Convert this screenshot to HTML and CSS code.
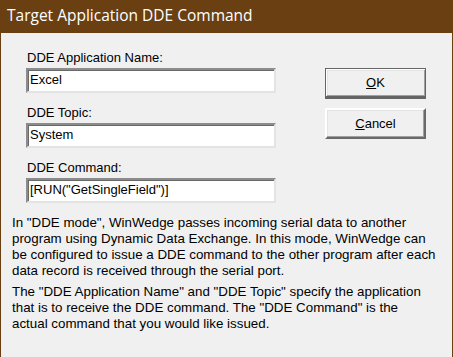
FILE: index.html
```html
<!DOCTYPE html>
<html lang="en">
<head>
    <meta charset="UTF-8">
    <title>Target Application DDE Command</title>
    <link rel="stylesheet" href="styles.css">
</head>
<body>
    <div class="window">
        <div class="titlebar">Target Application DDE Command</div>
        <div class="client">
            <div class="top">
                <div class="fields">
                    <label class="label">DDE Application Name:</label>
                    <div class="edit">Excel</div>
                    <label class="label">DDE Topic:</label>
                    <div class="edit">System</div>
                    <label class="label">DDE Command:</label>
                    <div class="edit">[RUN("GetSingleField")]</div>
                </div>
                <div class="buttons">
                    <button class="btn default"><u>O</u>K</button>
                    <button class="btn"><u>C</u>ancel</button>
                </div>
            </div>
            <div class="help">
                <p>In "DDE mode", WinWedge passes incoming serial data to another program using Dynamic Data Exchange. In this mode, WinWedge can be configured to issue a DDE command to the other program after each data record is received through the serial port.</p>
                <p class="narrow">The "DDE Application Name" and "DDE Topic" specify the application that is to receive the DDE command. The "DDE Command" is the actual command that you would like issued.</p>
            </div>
        </div>
    </div>
</body>
</html>
```

FILE: styles.css
```css
html, body {
    margin: 0;
    padding: 0;
}
body {
    width: 453px;
    height: 357px;
    overflow: hidden;
    font-family: "Liberation Sans", Arial, sans-serif;
    font-size: 13px;
    color: #000;
}
.window {
    height: 357px;
    border-left: 1px solid #6a4013;
    border-right: 1px solid #6a4013;
    background: #f0f0f0;
    box-sizing: border-box;
}
.titlebar {
    height: 33px;
    background: #6a4013;
    color: #fff;
    font-family: "Open Sans", "Noto Sans", sans-serif;
    font-size: 15.5px;
    line-height: 31px;
    padding-left: 6px;
}
.client {
    padding: 0 0 0 11px;
}
.top {
    display: flex;
}
.fields {
    display: flex;
    flex-direction: column;
    width: 250px;
    margin-left: 14px;
    padding-top: 15px;
}
.label {
    display: block;
    height: 20px;
    line-height: 20px;
    padding-left: 1px;
}
.edit {
    height: 25px;
    box-sizing: border-box;
    background: #fff;
    border: 2px solid;
    border-color: #8c8c8c #e3e3e3 #e3e3e3 #8c8c8c;
    box-shadow: inset 1px 1px 0 #696969;
    line-height: 20px;
    padding-left: 2px;
    margin-bottom: 10px;
}
.buttons {
    display: flex;
    flex-direction: column;
    gap: 9px;
    margin-left: 49px;
    padding-top: 35px;
}
.btn {
    width: 101px;
    height: 31px;
    background: #f0f0f0;
    font-family: "Liberation Sans", Arial, sans-serif;
    font-size: 13px;
    color: #000;
    padding: 0;
    border: 2px solid;
    border-color: #fff #696969 #696969 #fff;
    box-shadow: inset -1px -1px 0 #a0a0a0, inset 1px 1px 0 #e3e3e3;
}
.btn.default {
    border: 1px solid #646464;
    border-bottom-width: 3px;
    box-shadow: inset 1px 1px 0 #fff, inset -1px -1px 0 #a0a0a0, inset 2px 2px 0 #e3e3e3;
}
.help {
    padding-top: 2px;
    padding-right: 8px;
    font-size: 13.35px;
}
.help p {
    margin: 0 0 5px 0;
    line-height: 16px;
}
.help p.narrow {
    margin-right: 20px;
}
```
